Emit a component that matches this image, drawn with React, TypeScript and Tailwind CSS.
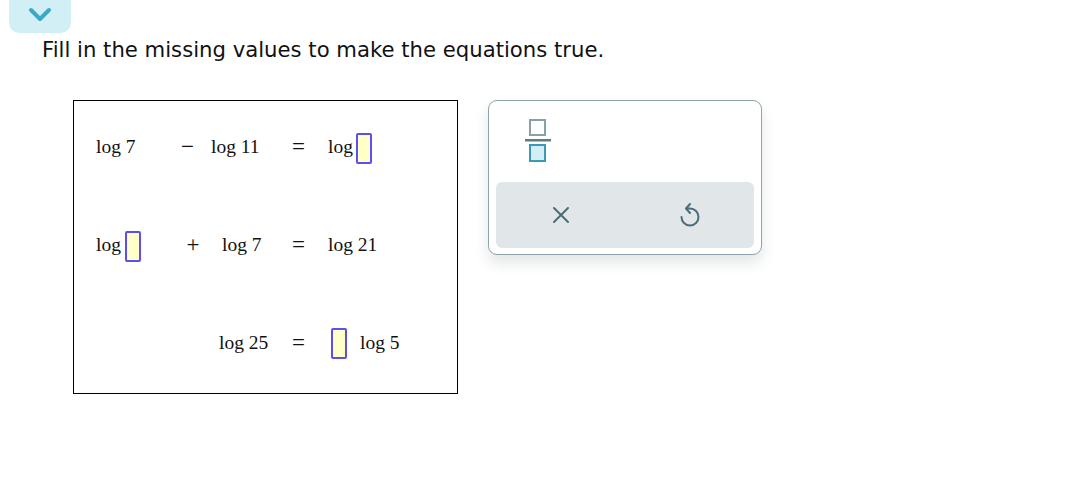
import React from "react";

const InputBox = ({ className = "" }: { className?: string }) => (
  <span
    className={`inline-block w-[16px] h-[31px] border-2 border-[#5b4ff0] bg-[#ffffc8] rounded-[2px] ${className}`}
  />
);

const serif = "font-['Liberation_Serif','Times_New_Roman',serif]";

export default function App() {
  return (
    <div className="relative w-[1087px] h-[489px] bg-white overflow-hidden">
      {/* top toggle */}
      <div className="ml-[9px] w-[62px] h-[33px] bg-[#d3eff6] rounded-b-[10px] flex items-center justify-center">
        <svg width="26" height="18" viewBox="0 0 26 18" className="-mt-[3px]">
          <path d="M4 4 L13 13 L22 4" fill="none" stroke="#3aa9c7" strokeWidth="4" strokeLinecap="round" strokeLinejoin="round" />
        </svg>
      </div>

      <div className="ml-[42px] mt-[4px] text-[21.2px] leading-[26px] text-[#111] font-['DejaVu_Sans',Verdana,sans-serif]">
        Fill in the missing values to make the equations true.
      </div>

      <div className="flex items-start ml-[73px] mt-[37px] gap-[30px]">
        {/* equation box */}
        <div className={`w-[385px] h-[294px] border border-black pt-[30px] pl-[22px] ${serif} text-[19.5px] text-[#111]`}>
          <div className="grid grid-cols-[74px_35px_70px_47px_1fr] auto-rows-[32px] gap-y-[66px] items-center">
            {/* row 1 */}
            <div>log 7</div>
            <div className="text-center text-[23px]">−</div>
            <div className="ml-[6px]">log 11</div>
            <div className="text-center text-[23px]">=</div>
            <div className="flex items-center ml-[6px]">
              <span>log</span>
              <InputBox className="ml-[3px] mt-[2px]" />
            </div>
            {/* row 2 */}
            <div className="flex items-center">
              <span>log</span>
              <InputBox className="ml-[4px] mt-[2px]" />
            </div>
            <div className="text-center ml-[11px] text-[23px]">+</div>
            <div className="ml-[17px]">log 7</div>
            <div className="text-center text-[23px]">=</div>
            <div className="ml-[6px]">log 21</div>
            {/* row 3 */}
            <div />
            <div />
            <div className="ml-[14px]">log 25</div>
            <div className="text-center text-[23px]">=</div>
            <div className="flex items-center ml-[9px]">
              <InputBox className="mt-[1px]" />
              <span className="ml-[13px]">log 5</span>
            </div>
          </div>
        </div>

        {/* keypad panel */}
        <div className="w-[274px] h-[155px] border border-[#8ea3ab] rounded-[9px] bg-white shadow-[0_8px_14px_rgba(40,60,70,0.13)] px-[7px] pt-[18px]">
          <div className="h-[45px] ml-[28px]">
            <svg width="28" height="44" viewBox="0 0 28 44">
              <rect x="6" y="1" width="15" height="15" fill="white" stroke="#8aa0a8" strokeWidth="2" />
              <rect x="1" y="20" width="26" height="2.5" fill="#5d7a86" />
              <rect x="6" y="26" width="15" height="16" fill="#d3eef5" stroke="#3a9ab5" strokeWidth="2" />
            </svg>
          </div>
          <div className="mt-[18px] h-[66px] bg-[#e1e6e9] rounded-[6px] grid grid-cols-2 items-center justify-items-center">
            <svg width="18" height="18" viewBox="0 0 18 18">
              <path d="M2 2 L16 16 M16 2 L2 16" stroke="#4c6c79" strokeWidth="2" strokeLinecap="round" fill="none" />
            </svg>
            <svg width="24" height="28" viewBox="0 0 24 28" className="mt-[-2px]">
              <path d="M3.5 17 A8.5 8.5 0 1 0 12 8.5 H8.5" fill="none" stroke="#4c6c79" strokeWidth="2" strokeLinecap="round" strokeLinejoin="round" />
              <path d="M12 4 L8 8.5 L12 13" fill="none" stroke="#4c6c79" strokeWidth="2" strokeLinecap="round" strokeLinejoin="round" />
            </svg>
          </div>
        </div>
      </div>
    </div>
  );
}
